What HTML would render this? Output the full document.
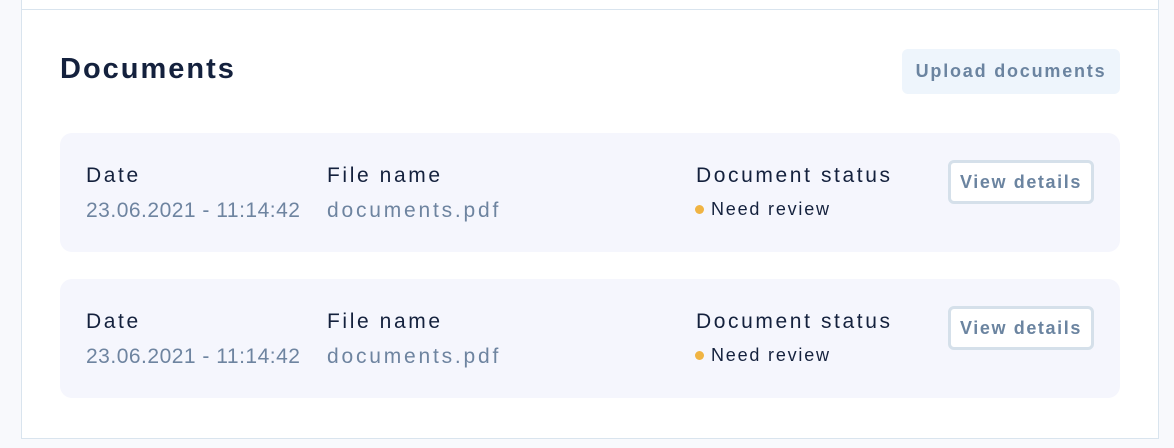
<!DOCTYPE html>
<html><head><style>
body{margin:0;width:1174px;height:448px;background:#f8f9fc;font-family:"Liberation Sans",sans-serif;overflow:hidden;position:relative}
.panel{position:absolute;left:21px;top:9px;width:1136px;height:428px;background:#fff;border:1px solid #d9e4ee}
.top{position:absolute;left:21px;top:0;width:1138px;height:9px;background:#fff;border-left:1px solid #d9e4ee;border-right:1px solid #d9e4ee;box-sizing:border-box}
h1{position:absolute;left:60px;top:53px;margin:0;font-size:29px;font-weight:bold;color:#14213d;letter-spacing:2px}
.up{position:absolute;left:902px;top:49px;width:218px;height:45px;background:#eef5fc;border-radius:6px;color:#6b84a0;font-weight:bold;font-size:18px;line-height:45px;text-align:center;letter-spacing:1.8px}
.card{position:absolute;left:60px;width:1060px;height:119px;background:#f5f6fd;border-radius:12px}
.t{position:absolute;font-size:21px;color:#14213d;white-space:nowrap;letter-spacing:2.6px}
.v{position:absolute;font-size:21px;color:#6e84a0;white-space:nowrap}
.s{position:absolute;left:651px;top:66px;font-size:18px;color:#14213d;white-space:nowrap;letter-spacing:1.8px}
.dot{position:absolute;left:635px;top:72px;width:9px;height:9px;border-radius:50%;background:#f0b443}
.btn{position:absolute;left:888px;top:27px;width:140px;height:38px;border:3px solid #d5e0ea;border-radius:6px;background:#fff;color:#6b84a0;font-weight:bold;font-size:18px;line-height:38px;text-align:center;letter-spacing:1.6px}
</style></head><body>
<div class="top"></div>
<div class="panel"></div>
<h1>Documents</h1>
<div class="up">Upload documents</div>
<div class="card" style="top:133px">
<div class="t" style="left:26px;top:31px">Date</div>
<div class="v" style="left:26px;top:66px;letter-spacing:0.5px">23.06.2021 - 11:14:42</div>
<div class="t" style="left:267px;top:31px">File name</div>
<div class="v" style="left:267px;top:66px;letter-spacing:2.8px">documents.pdf</div>
<div class="t" style="left:636px;top:31px">Document status</div>
<div class="dot"></div><div class="s">Need review</div>
<div class="btn">View details</div>
</div>
<div class="card" style="top:279px">
<div class="t" style="left:26px;top:31px">Date</div>
<div class="v" style="left:26px;top:66px;letter-spacing:0.5px">23.06.2021 - 11:14:42</div>
<div class="t" style="left:267px;top:31px">File name</div>
<div class="v" style="left:267px;top:66px;letter-spacing:2.8px">documents.pdf</div>
<div class="t" style="left:636px;top:31px">Document status</div>
<div class="dot"></div><div class="s">Need review</div>
<div class="btn">View details</div>
</div>
</body></html>
